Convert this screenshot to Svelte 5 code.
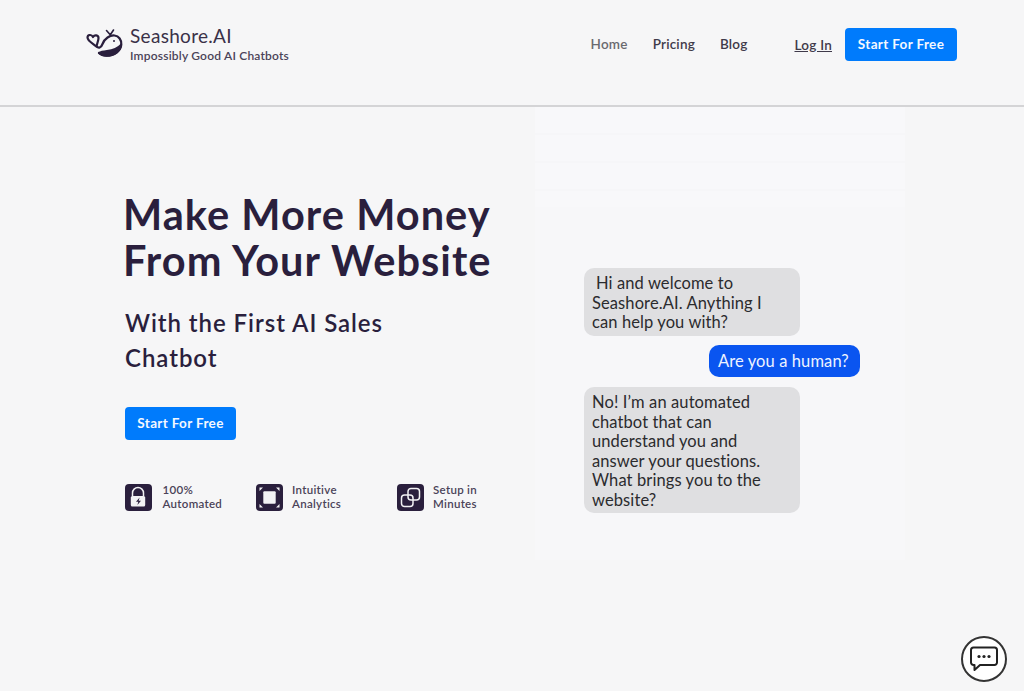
<script lang="ts">
  const navLinks = ["Home", "Pricing", "Blog"];

  const features = [
    { id: "auto", lines: ["100%", "Automated"] },
    { id: "analytics", lines: ["Intuitive", "Analytics"] },
    { id: "setup", lines: ["Setup in", "Minutes"] },
  ];
</script>

<div class="page">
  <header class="header">
    <a class="brand" href="#top">
      <svg class="whale" viewBox="0 0 37 30" width="37" height="30" fill="none" stroke="#2a1f3d" stroke-width="2.2" stroke-linecap="round" stroke-linejoin="round">
        <path d="M10.5 19.5 C7 16.5 1.5 14 1.5 10.5 C1.5 7.5 5.5 7 7 10 C8.5 7.5 12.5 8 12.5 11 C12.5 13.5 11 16.5 10.5 19.5 Z" />
        <path d="M10.5 19.5 C12.5 21.5 15 21 16.5 17 C18.5 11.5 24 8 28.5 8.5 C33 9 35.5 13 35.3 17.5 C35 24 28 28.7 20.5 28.7 C17.5 28.7 15 27.8 13 26" />
        <path d="M13 26 C19 22.5 28 26 35 18 C34.5 24 28 28.7 20.5 28.7 C17.5 28.7 15 27.8 13 26 Z" fill="#2a1f3d" />
        <path d="M24 7.5 L20.5 3.5 M24.5 7.5 L27.5 3" stroke-width="1.6" />
        <circle cx="28" cy="14" r="1" fill="#2a1f3d" stroke="none" />
      </svg>
      <span class="brand-text">
        <span class="brand-name">Seashore.AI</span>
        <span class="brand-tag">Impossibly Good AI Chatbots</span>
      </span>
    </a>

    <nav class="nav">
      {#each navLinks as link, i}
        <a class="nav-link" class:muted={i === 0} href="#top">{link}</a>
      {/each}
    </nav>

    <div class="actions">
      <a class="login" href="#top">Log In</a>
      <a class="cta cta-nav" href="#top">Start For Free</a>
    </div>
  </header>

  <main class="hero">
    <section class="copy">
      <h1>Make More Money<br />From Your Website</h1>
      <h2>With the First AI Sales<br />Chatbot</h2>
      <a class="cta cta-hero" href="#top">Start For Free</a>

      <ul class="features">
        {#each features as f}
          <li class="feature">
            <svg class="feature-icon" viewBox="0 0 27 27" width="27" height="27">
              <rect width="27" height="27" rx="4" fill="#2a1f3d" />
              {#if f.id === "auto"}
                <path d="M7.5 12 V9 a5.5 5.5 0 0 1 11 0 V12" fill="none" stroke="#f2f2f4" stroke-width="1.5" />
                <rect x="5.8" y="12" width="14.4" height="10.5" rx="1.5" fill="#f2f2f4" />
                <path d="M14.6 13.6 L11 17.8 H13.3 L12.4 20.9 L16 16.7 H13.7 Z" fill="#2a1f3d" />
              {:else if f.id === "analytics"}
                <rect x="7.3" y="7.3" width="12.4" height="12.4" rx="1" fill="#f2f2f4" />
                <path d="M3.5 7 V3.5 H7 Z M20 3.5 H23.5 V7 Z M23.5 20 V23.5 H20 Z M7 23.5 H3.5 V20 Z" fill="#f2f2f4" />
              {:else}
                <rect x="11" y="4.5" width="11.5" height="11.5" rx="3" fill="none" stroke="#f2f2f4" stroke-width="1.5" />
                <rect x="4.5" y="11" width="11.5" height="11.5" rx="3" fill="none" stroke="#f2f2f4" stroke-width="1.5" />
              {/if}
            </svg>
            <span class="feature-text">{f.lines[0]}<br />{f.lines[1]}</span>
          </li>
        {/each}
      </ul>
    </section>

    <section class="demo">
      <div class="bubble bot first"><span class="indent">Hi and welcome to</span><br />Seashore.AI. Anything I<br />can help you with?</div>
      <div class="bubble user">Are you a human?</div>
      <div class="bubble bot last">No! I’m an automated<br />chatbot that can<br />understand you and<br />answer your questions.<br />What brings you to the<br />website?</div>
    </section>
  </main>

  <button class="chat-launcher" aria-label="Open chat">
    <svg viewBox="0 0 30 30" width="30" height="30" fill="none">
      <path d="M4.5 3.5 H25.5 A2.5 2.5 0 0 1 28 6 V18.5 A2.5 2.5 0 0 1 25.5 21 H11 L5.5 26 V21 H4.5 A2.5 2.5 0 0 1 2 18.5 V6 A2.5 2.5 0 0 1 4.5 3.5 Z" stroke="#222" stroke-width="2" stroke-linejoin="round" />
      <circle cx="10" cy="12.5" r="1.6" fill="#222" />
      <circle cx="15" cy="12.5" r="1.6" fill="#222" />
      <circle cx="20" cy="12.5" r="1.6" fill="#222" />
    </svg>
  </button>
</div>

<style>
  :global(body) {
    background: #f6f6f7;
    font-family: Lato, "Liberation Sans", sans-serif;
    color: #2a1f3d;
  }

  .page {
    height: 691px;
    overflow: hidden;
    display: flex;
    flex-direction: column;
  }

  a {
    text-decoration: none;
    color: inherit;
  }

  .header {
    height: 107px;
    flex: none;
    box-sizing: border-box;
    display: flex;
    align-items: flex-start;
    padding: 24px 67px 0 86px;
    border-bottom: 2px solid #d4d4d6;
  }

  .brand {
    display: flex;
    align-items: flex-start;
    gap: 7px;
    margin-right: auto;
  }

  .whale {
    margin-top: 3px;
  }

  .brand-text {
    display: flex;
    flex-direction: column;
    gap: 1px;
    padding-top: 1px;
  }

  .brand-name {
    font-size: 19px;
    line-height: 22px;
    letter-spacing: 0.3px;
    color: #3a3148;
  }

  .brand-tag {
    font-size: 12px;
    line-height: 15px;
    font-weight: 600;
    letter-spacing: 0.2px;
    color: #4a4358;
  }

  .nav {
    display: flex;
    gap: 25px;
    padding-top: 12px;
    margin-right: 47px;
  }

  .nav-link {
    font-size: 13.5px;
    line-height: 17px;
    font-weight: 600;
    letter-spacing: 0.2px;
    color: #3f3a4a;
  }

  .nav-link.muted {
    color: #6a6a6f;
  }

  .actions {
    display: flex;
    align-items: center;
    gap: 13px;
    margin-top: 4px;
  }

  .login {
    font-size: 13.5px;
    font-weight: 600;
    letter-spacing: 0.25px;
    text-decoration: underline;
    color: #3f3a4a;
  }

  .cta {
    display: flex;
    align-items: center;
    justify-content: center;
    box-sizing: border-box;
    padding-bottom: 1px;
    background: #007bfc;
    color: #f4f8ff;
    font-size: 13.5px;
    font-weight: 700;
    letter-spacing: 0.35px;
    border-radius: 4px;
  }

  .cta-nav {
    width: 112px;
    height: 33px;
  }

  .hero {
    flex: 1;
    display: grid;
    grid-template-columns: 535px 370px;
    align-items: start;
  }

  .copy {
    padding: 85px 0 0 123px;
  }

  h1 {
    margin: 0;
    font-size: 41.5px;
    line-height: 45.5px;
    font-weight: 700;
    letter-spacing: 1.05px;
    color: #2a1f3d;
  }

  h2 {
    margin: 22px 0 0 2px;
    font-size: 24px;
    line-height: 35px;
    font-weight: 600;
    letter-spacing: 0.95px;
    color: #2a1f3d;
  }

  .cta-hero {
    width: 111px;
    height: 33px;
    margin: 32px 0 0 2px;
  }

  .features {
    list-style: none;
    margin: 43px 0 0 2px;
    padding: 0;
    display: grid;
    grid-template-columns: 131px 141px auto;
  }

  .feature {
    display: flex;
    align-items: center;
    gap: 9px;
  }

  .feature:first-child {
    gap: 10.5px;
  }

  .feature-icon {
    flex: none;
  }

  .feature-text {
    font-size: 11.5px;
    line-height: 14px;
    letter-spacing: 0.3px;
    font-weight: 600;
    color: #4a4358;
  }

  .demo {
    height: 453px;
    box-sizing: border-box;
    padding: 161px 45px 0 49px;
    display: flex;
    flex-direction: column;
    align-items: flex-start;
    background:
      repeating-linear-gradient(to bottom, #f8f8fa 0 26px, #f6f6f8 26px 28px) top / 100% 100px no-repeat,
      #f7f7f9;
  }

  .bubble {
    box-sizing: border-box;
    font-size: 16.5px;
    line-height: 19.5px;
    border-radius: 10px;
    color: #2b2b2e;
    letter-spacing: 0.1px;
  }

  .bot {
    width: 216px;
    padding: 6px 8px 3.5px;
    background: #dfdfe1;
  }

  .last {
    padding-bottom: 2.5px;
  }

  .first {
    margin-bottom: 9px;
  }

  .indent {
    padding-left: 4px;
  }

  .user {
    align-self: flex-end;
    width: 151px;
    height: 32px;
    padding: 7px 0 0 9px;
    margin-bottom: 10px;
    background: #0a55f0;
    color: #eef3ff;
    white-space: nowrap;
  }

  .chat-launcher {
    position: fixed;
    right: 17px;
    bottom: 9px;
    width: 46px;
    height: 46px;
    padding: 0;
    display: flex;
    align-items: center;
    justify-content: center;
    background: #fff;
    border: 2px solid #333;
    border-radius: 50%;
  }
</style>
